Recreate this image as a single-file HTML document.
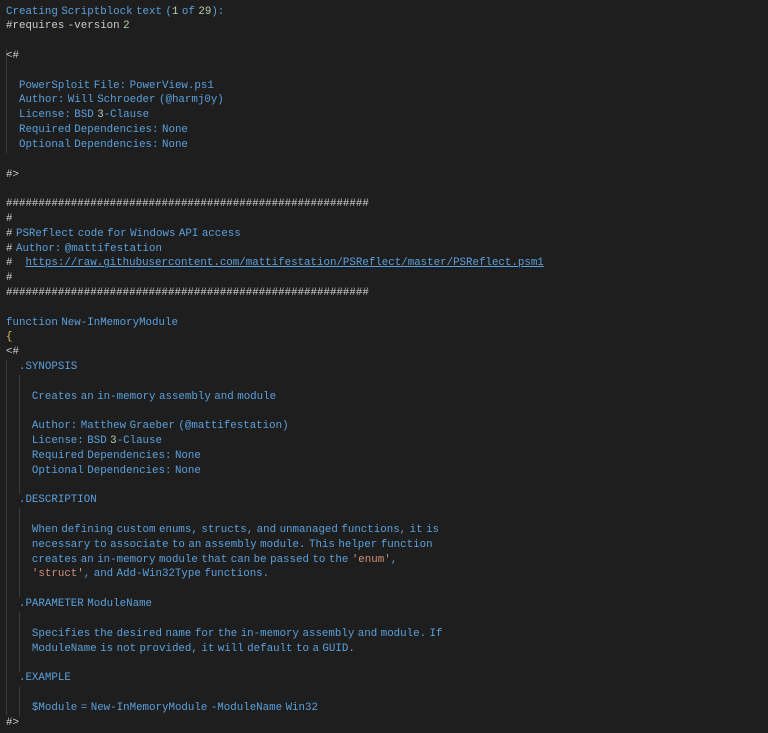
<!DOCTYPE html>
<html><head><meta charset="utf-8"><style>
html,body{margin:0;padding:0;background:#1e1e1e;}
body{width:768px;height:733px;overflow:hidden;position:relative;}
.c{position:absolute;left:6px;top:4.6px;font-family:"Liberation Mono",monospace;font-size:10.8px;line-height:14.82px;color:#5aa0dc;white-space:pre;word-spacing:-3px;}
.i{word-spacing:0}
.w{color:#cccccc}.n{color:#b5cea8}.s{color:#ce9178}.y{color:#e0c060}.u{text-decoration:underline}
.g{position:absolute;width:1px;background:#3c3c3c;}
</style></head><body>
<div class="g" style="left:6px;top:49px;height:104px"></div>
<div class="g" style="left:6px;top:360px;height:355px"></div>
<div class="g" style="left:19px;top:375px;height:119px"></div>
<div class="g" style="left:19px;top:508px;height:89px"></div>
<div class="g" style="left:19px;top:612px;height:60px"></div>
<div class="g" style="left:19px;top:687px;height:30px"></div>
<div class="c">Creating Scriptblock text (<span class="n">1</span> of <span class="n">29</span>):
<span class="w">#requires -version</span> <span class="n">2</span>

<span class="w">&lt;#</span>

<span class="i">  </span>PowerSploit File: PowerView.ps1
<span class="i">  </span>Author: Will Schroeder (@harmj0y)
<span class="i">  </span>License: BSD <span class="n">3</span>-Clause
<span class="i">  </span>Required Dependencies: None
<span class="i">  </span>Optional Dependencies: None

<span class="w">#&gt;</span>

<span class="w">########################################################</span>
<span class="w">#</span>
<span class="w">#</span> PSReflect code for Windows API access
<span class="w">#</span> Author: @mattifestation
<span class="w">#</span><span class="i">  </span><span class="u">https://raw.githubusercontent.com/mattifestation/PSReflect/master/PSReflect.psm1</span>
<span class="w">#</span>
<span class="w">########################################################</span>

function New-InMemoryModule
<span class="y">{</span>
<span class="w">&lt;#</span>
<span class="i">  </span>.SYNOPSIS

<span class="i">    </span>Creates an in-memory assembly and module

<span class="i">    </span>Author: Matthew Graeber (@mattifestation)
<span class="i">    </span>License: BSD <span class="n">3</span>-Clause
<span class="i">    </span>Required Dependencies: None
<span class="i">    </span>Optional Dependencies: None

<span class="i">  </span>.DESCRIPTION

<span class="i">    </span>When defining custom enums, structs, and unmanaged functions, it is
<span class="i">    </span>necessary to associate to an assembly module. This helper function
<span class="i">    </span>creates an in-memory module that can be passed to the <span class="s">'enum'</span>,
<span class="i">    </span><span class="s">'struct'</span>, and Add-Win32Type functions.

<span class="i">  </span>.PARAMETER ModuleName

<span class="i">    </span>Specifies the desired name for the in-memory assembly and module. If
<span class="i">    </span>ModuleName is not provided, it will default to a GUID.

<span class="i">  </span>.EXAMPLE

<span class="i">    </span>$Module = New-InMemoryModule -ModuleName Win32
<span class="w">#&gt;</span></div>
</body></html>
